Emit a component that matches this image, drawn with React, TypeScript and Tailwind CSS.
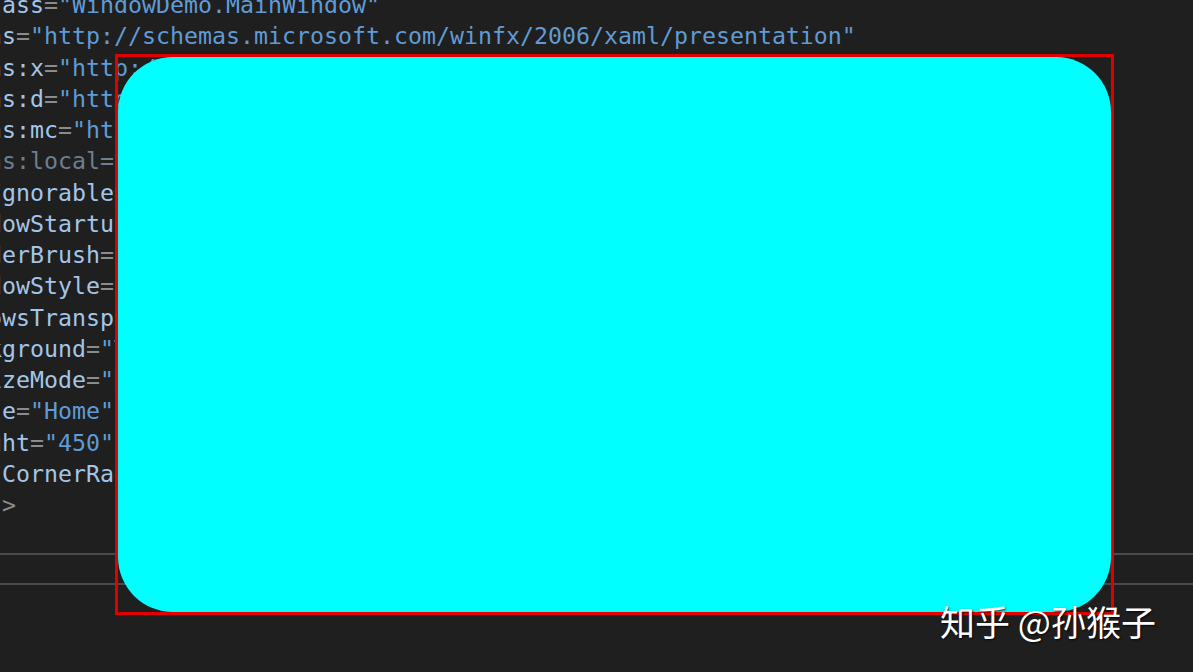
import React from "react";

type Tok = { t: string; c: "n" | "e" | "v" | "d" | "p" };

const color: Record<Tok["c"], string> = {
  n: "text-[#a3c6e8]",
  e: "text-[#8b8b8b]",
  v: "text-[#5f9bd6]",
  d: "text-[#6d7f90]",
  p: "text-[#8b8b8b]",
};

const attr = (name: string, value: string, dim = false): Tok[] => [
  { t: name, c: dim ? "d" : "n" },
  { t: "=", c: dim ? "d" : "e" },
  { t: `"${value}"`, c: dim ? "d" : "v" },
];

const lines: Tok[][] = [
  attr("x:Class", "WindowDemo.MainWindow"),
  attr("xmlns", "http://schemas.microsoft.com/winfx/2006/xaml/presentation"),
  attr("xmlns:x", "http://schemas.microsoft.com/winfx/2006/xaml"),
  attr("xmlns:d", "http://schemas.microsoft.com/expression/blend/2008"),
  attr("xmlns:mc", "http://schemas.openxmlformats.org/markup-compatibility/2006"),
  attr("xmlns:local", "clr-namespace:WindowDemo", true),
  attr("mc:Ignorable", "d"),
  attr("WindowStartupLocation", "CenterScreen"),
  attr("BorderBrush", "Red"),
  attr("WindowStyle", "None"),
  attr("AllowsTransparency", "True"),
  attr("Background", "Transparent"),
  attr("ResizeMode", "NoResize"),
  attr("Title", "Home"),
  [...attr("Height", "450"), { t: " ", c: "e" }, ...attr("Width", "800")],
  attr("ctl:CornerRadius", "30"),
  [{ t: "   \u2009>", c: "p" }],
];

export default function App() {
  return (
    <div className="relative h-[672px] w-[1193px] overflow-hidden bg-[#1f1f1f]">
      <div className="flex h-full flex-col">
        <div className="ml-[-54px] mt-[-11px] h-[564px] font-['DejaVu_Sans_Mono',monospace] text-[23.25px] leading-[31.25px]">
          {lines.map((toks, i) => (
            <div key={i} className="whitespace-pre">
              {toks.map((tk, j) => (
                <span key={j} className={color[tk.c]}>
                  {tk.t}
                </span>
              ))}
            </div>
          ))}
        </div>
        <div className="h-[30px] border-t-2 border-[#4a4a4a]" />
        <div className="flex-1 border-t-2 border-[#4a4a4a]" />
      </div>

      <div className="absolute left-[115px] top-[54px] h-[561px] w-[999px] border-[3px] border-[#e00000]" />
      <div className="absolute left-[118px] top-[57px] h-[555px] w-[993px] rounded-[55px] bg-[#00ffff]" />

      <div className="absolute left-[940px] top-[598px] font-['Noto_Sans_CJK_SC',sans-serif] text-[35px] leading-[46px] text-white [text-shadow:1px_1px_2px_rgba(0,0,0,0.8)]">
        知乎 @孙猴子
      </div>
    </div>
  );
}
